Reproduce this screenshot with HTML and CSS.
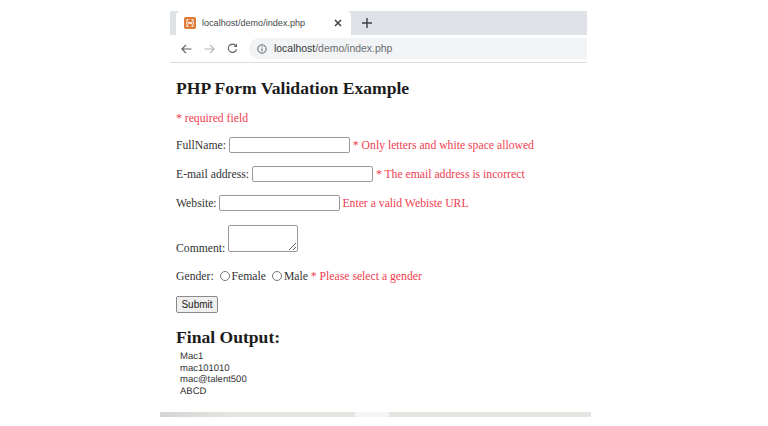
FILE: index.html
```html
<!DOCTYPE html>
<html>
<head lang="en">
	<meta charset="UTF-8">
	<title>PHP Form Validation Example</title>
	<link rel="stylesheet" href="styles.css">
</head>
<body>

<div class="shot">

	<div class="browser">
		<div class="tabstrip">
			<div class="tab">
				<svg class="favicon" width="12" height="12" viewBox="0 0 12 12">
					<rect width="12" height="12" rx="2" fill="#e07b35"/>
					<path d="M4.500 2.500H3v2.500L2.500 6 3 7v2.500h1.500M7.500 2.500H9v2.500L9.500 6 9 7v2.500H7.500M4 5l4 2M8 5L4 7" fill="none" stroke="#fff" stroke-width="1"/>
				</svg>
				<span class="tab-title">localhost/demo/index.php</span>
				<svg class="tab-close" width="8" height="8" viewBox="0 0 8 8">
					<path d="M1 1l6 6M7 1L1 7" stroke="#3c4043" stroke-width="1.500"/>
				</svg>
			</div>
			<svg class="tab-new" width="10" height="10" viewBox="0 0 10 10">
				<path d="M5 0v10M0 5h10" stroke="#3c4043" stroke-width="1.400"/>
			</svg>
		</div>
		<div class="toolbar">
			<svg class="nav-icon" width="11" height="10" viewBox="0 0 11 10">
				<path d="M10.500 5H1M5 .8L.9 5 5 9.200" fill="none" stroke="#5f6368" stroke-width="1.200"/>
			</svg>
			<svg class="nav-icon" width="11" height="10" viewBox="0 0 11 10">
				<path d="M.5 5H10M6 .8L10.100 5 6 9.200" fill="none" stroke="#b4b7ba" stroke-width="1.200"/>
			</svg>
			<svg class="nav-icon" width="11" height="11" viewBox="0 0 11 11">
				<path d="M9.500 6.500A4.200 4.200 0 1 1 8.500 2.300" fill="none" stroke="#5f6368" stroke-width="1.200"/>
				<path d="M10 .5v3.500H6.500z" fill="#5f6368"/>
			</svg>
			<div class="omnibox">
				<svg width="10" height="10" viewBox="0 0 10 10">
					<circle cx="5" cy="5" r="4.200" fill="none" stroke="#5f6368" stroke-width="1"/>
					<path d="M5 4.400v3M5 2.400v1" stroke="#5f6368" stroke-width="1"/>
				</svg>
				<span class="url"><b>localhost</b>/demo/index.php</span>
			</div>
		</div>
	</div>

	<div class="page">
		<h2>PHP Form Validation Example</h2>
		<p class="error required">* required field</p>

		<form class="demo-form">
			<div class="row">
				FullName: <input type="text" class="field"> <span class="error">* Only letters and white space allowed</span>
			</div>
			<div class="row">
				E-mail address: <input type="text" class="field"> <span class="error">* The email address is incorrect</span>
			</div>
			<div class="row">
				Website: <input type="text" class="field field-website"> <span class="error">Enter a valid Webiste URL</span>
			</div>
			<div class="row row-comment">
				Comment: <textarea class="comment"></textarea>
			</div>
			<div class="row">
				Gender: <input type="radio" name="gender" id="female" class="radio"><label for="female">Female</label>
				<input type="radio" name="gender" id="male" class="radio"><label for="male">Male</label>
				<span class="error">* Please select a gender</span>
			</div>
			<button type="button" class="submit">Submit</button>
		</form>

		<h2 class="output-title">Final Output:</h2>
		<div class="output">
			<div>Mac1</div>
			<div>mac101010</div>
			<div>mac@talent500</div>
			<div>ABCD</div>
		</div>
	</div>

	<div class="next-shot">
		<div class="next-left"></div>
		<div class="next-gap"></div>
		<div class="next-right"></div>
	</div>

</div>

</body>
</html>
```

FILE: styles.css
```css
* {
	margin: 0;
	padding: 0;
	box-sizing: border-box;
}
html, body {
	height: 100%;
	background: #ffffff;
}
body {
	font-family: "Liberation Serif", "Times New Roman", serif;
	color: #333333;
	overflow: hidden;
}
.shot {
	width: 431px;
	margin-left: 160px;
	padding-top: 11px;
}
.browser {
	width: 417px;
	margin-left: 10px;
	border-bottom: 1px solid #dadce0;
}
.tabstrip {
	display: flex;
	align-items: center;
	height: 24px;
	background: #dee1e6;
	padding-left: 6px;
}
.tab {
	display: flex;
	align-items: center;
	width: 175px;
	height: 24px;
	padding: 0 9px 0 8px;
	background: #ffffff;
	border-radius: 5px 5px 0 0;
}
.favicon {
	flex: none;
}
.tab-title {
	margin-left: 6px;
	font: 9.100px "Liberation Sans", Arial, sans-serif;
	color: #45484c;
	flex: 1;
}
.tab-new {
	margin-left: 11px;
}
.toolbar {
	display: flex;
	align-items: center;
	height: 27px;
	background: #ffffff;
	padding-left: 11px;
}
.nav-icon {
	flex: none;
	margin-right: 12px;
}
.nav-icon:nth-child(3) {
	margin-right: 11px;
}
.omnibox {
	flex: 1;
	display: flex;
	align-items: center;
	gap: 7px;
	height: 21px;
	padding-left: 8px;
	background: #f1f3f4;
	border-radius: 10px 0 0 10px;
}
.url {
	font: 10.450px "Liberation Sans", Arial, sans-serif;
	color: #6a6d71;
}
.url b {
	font-weight: 400;
	color: #35383c;
}
.page {
	padding: 15px 0 0 16px;
	font-size: 11.700px;
}
h2 {
	font-size: 17.600px;
	line-height: 21px;
	color: #1c1c1c;
}
.error {
	color: #f0404f;
}
.required {
	margin-top: 12px;
	line-height: 15px;
}
.demo-form {
	margin-top: 8px;
}
.row {
	height: 29px;
	display: block;
	line-height: 24px;
	white-space: nowrap;
}
.field {
	width: 121px;
	height: 16px;
	border: 1px solid #9a9a9a;
	border-radius: 2px;
	background: #ffffff;
	vertical-align: 0;
}
.field-website {
	margin-left: -1px;
}
.row-comment {
	height: 40px;
	margin-top: 4px;
	line-height: 15px;
}
.comment {
	width: 70px;
	height: 27px;
	border: 1px solid #9a9a9a;
	border-radius: 2px;
	vertical-align: 0;
}
.radio {
	width: 10px;
	height: 10px;
	margin: 0 2px 0 3px;
	vertical-align: -1px;
}
.submit {
	display: block;
	width: 42px;
	height: 17px;
	margin-top: 2px;
	font: 10px "Liberation Sans", Arial, sans-serif;
	color: #222222;
	background: #efefef;
	border: 1px solid #8a8a8a;
	border-radius: 2px;
}
.output-title {
	margin-top: 14px;
}
.output {
	margin: 3px 0 0 4px;
	font: 9.500px/11.700px "Liberation Sans", Arial, sans-serif;
	color: #333333;
	text-rendering: geometricPrecision;
}
.next-shot {
	display: flex;
	height: 5px;
	margin-top: 14px;
}
.next-left {
	width: 195px;
	background: linear-gradient(to right, #d4d4d2, #e6e5e1 40%);
}
.next-gap {
	width: 34px;
	background: #f4f4f2;
}
.next-right {
	flex: 1;
	background: #e6e5e1;
}
```
